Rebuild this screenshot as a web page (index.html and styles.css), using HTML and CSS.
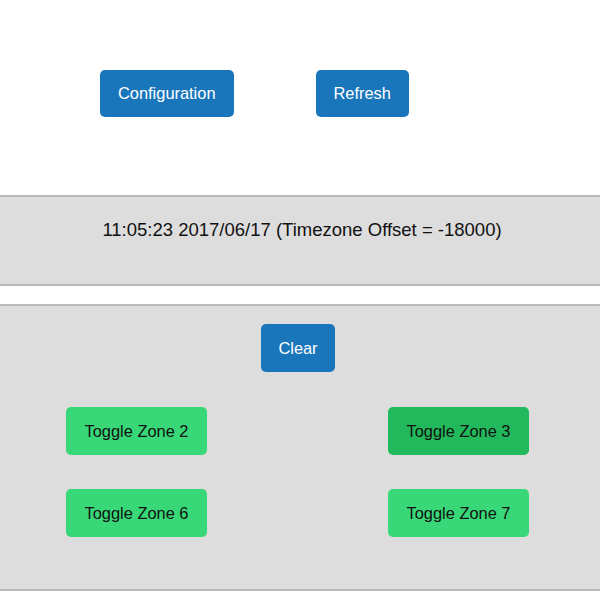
FILE: index.html
```html
<!DOCTYPE html>
<html>
<head>
<meta charset="utf-8">
<link rel="stylesheet" href="styles.css">
</head>
<body>
<div class="top">
  <button class="btn btn-blue">Configuration</button>
  <button class="btn btn-blue">Refresh</button>
</div>
<div class="panel time-panel">
  <div class="time">11:05:23 2017/06/17 (Timezone Offset = -18000)</div>
</div>
<div class="panel zone-panel">
  <div class="clear-row">
    <button class="btn btn-blue clear">Clear</button>
  </div>
  <div class="zone-row first">
    <button class="btn btn-green">Toggle Zone 2</button>
    <button class="btn btn-green active">Toggle Zone 3</button>
  </div>
  <div class="zone-row second">
    <button class="btn btn-green">Toggle Zone 6</button>
    <button class="btn btn-green">Toggle Zone 7</button>
  </div>
</div>
</body>
</html>
```
FILE: styles.css
```css
html, body {
  margin: 0;
  padding: 0;
  background: #ffffff;
  font-family: "Liberation Sans", Arial, sans-serif;
}
.btn {
  font-family: "Liberation Sans", Arial, sans-serif;
  font-size: 16.4px;
  height: 47px;
  padding: 0 18px;
  border: none;
  border-radius: 5px;
  box-sizing: border-box;
  cursor: pointer;
}
.btn-blue {
  background: #1a76bb;
  color: #ffffff;
}
.btn-green {
  background: #38d878;
  color: #111111;
  width: 141px;
  height: 48px;
}
.btn-green.active {
  background: #21b95b;
}
.top {
  height: 195px;
  box-sizing: border-box;
  padding: 70px 0 0 100px;
  display: flex;
  align-items: flex-start;
  gap: 82px;
}
.panel {
  background: #dddddd;
  border-top: 2px solid #b9b9b9;
  border-bottom: 2px solid #b9b9b9;
}
.time-panel {
  height: 87px;
}
.time {
  padding-top: 22px;
  padding-left: 4px;
  text-align: center;
  font-size: 18.5px;
  color: #111111;
}
.zone-panel {
  margin-top: 18px;
  padding: 18px 0 52px;
  display: flex;
  flex-direction: column;
}
.clear-row {
  display: flex;
  padding-left: 261px;
}
.clear {
  height: 48px;
  width: 74px;
  padding: 0;
}
.zone-row {
  display: flex;
  justify-content: space-between;
  padding: 0 71px 0 66px;
}
.zone-row.first {
  margin-top: 35px;
}
.zone-row.second {
  margin-top: 34px;
}
```
